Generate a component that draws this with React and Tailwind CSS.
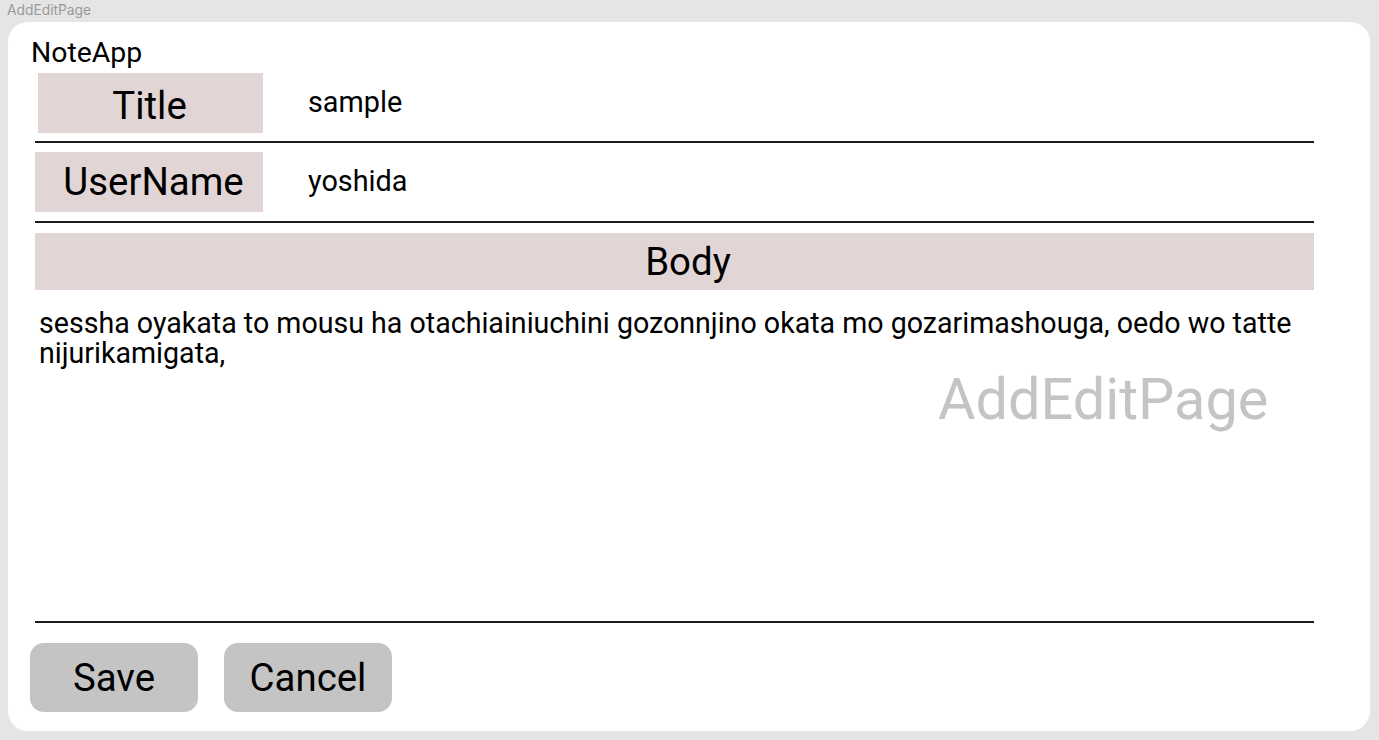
import React, { useState } from 'react'

function LabelRow({ label, value, boxClass }) {
    return (
        <div className='flex items-center h-[60px]'>
            <div className={`h-full bg-[#e2d5d5] flex items-center justify-center text-[38.4px] text-black ${boxClass}`}>
                {label}
            </div>
            <div className='ml-[45px] text-[28.8px] text-black'>{value}</div>
        </div>
    )
}

function App() {

    //form values
    const [title] = useState('sample')
    const [userName] = useState('yoshida')
    const [body] = useState('sessha oyakata to mousu ha otachiainiuchini gozonnjino okata mo gozarimashouga, oedo wo tatte nijurikamigata,')

    return (
        <div className='w-[1379px] h-[740px] bg-[#e5e5e5] font-["Roboto",sans-serif] overflow-hidden'>
            <div className='h-[22px] pl-[7px] pt-[2px] text-[13.8px] leading-[17px] text-[#9a9a9a] font-["Inter",sans-serif]'>
                AddEditPage
            </div>
            <div className='ml-2 w-[1362px] h-[709px] bg-white rounded-[20px] flex flex-col pl-[27px] pr-[56px]'>
                <div className='mt-[16px] h-[30px] leading-[30px] -ml-[4px] text-[28.4px] text-black'>NoteApp</div>

                <div className='mt-[5px]'>
                    <LabelRow label='Title' value={title} boxClass='ml-[3px] w-[225px] pt-[6px] pr-[2px]' />
                </div>
                <div className='mt-[8px] h-[2px] bg-[#1a1a1a]'></div>

                <div className='mt-[9px]'>
                    <LabelRow label='UserName' value={userName} boxClass='w-[228px] pl-[9px]' />
                </div>
                <div className='mt-[9px] h-[2px] bg-[#1a1a1a]'></div>

                <div className='mt-[10px] h-[57px] bg-[#e2d5d5] flex items-center justify-center pl-[27px] text-[38.4px] text-black'>
                    Body
                </div>

                <div className='relative h-[331px]'>
                    <p className='pt-[18px] pl-[4px] pr-[10px] text-[28.6px] leading-[30px] text-black'>{body}</p>
                    <div className='absolute left-[903px] top-[76px] text-[57.6px] leading-[67px] text-[#c4c4c4] whitespace-nowrap'>
                        AddEditPage
                    </div>
                </div>
                <div className='h-[2px] bg-[#1a1a1a]'></div>

                <div className='mt-[20px] flex gap-[26px] -ml-[5px]'>
                    <button className='w-[168px] h-[69px] rounded-[14px] bg-[#c4c4c4] text-[38.4px] text-black'>Save</button>
                    <button className='w-[168px] h-[69px] rounded-[14px] bg-[#c4c4c4] text-[38.4px] text-black'>Cancel</button>
                </div>
            </div>
        </div>
    )
}

export default App
